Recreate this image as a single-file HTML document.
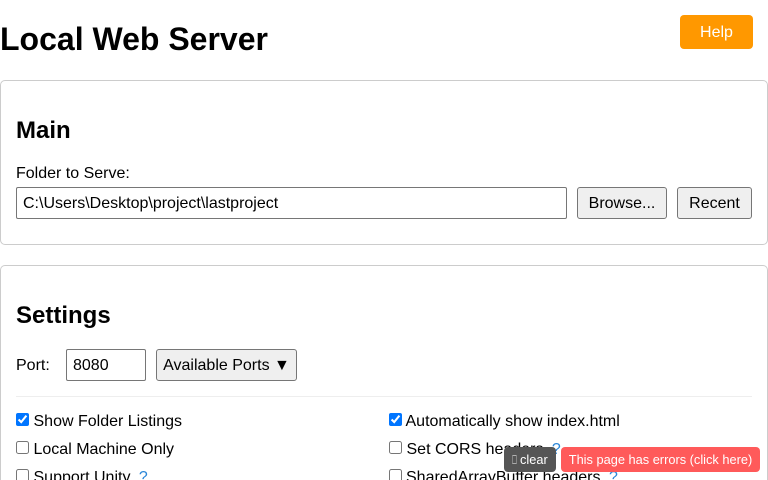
<!DOCTYPE html>
<html>
<head>
<meta charset="utf-8">
<style>
html,body{margin:0;padding:0;width:768px;height:480px;overflow:hidden;background:#fff;font-family:"Liberation Sans",Arial,sans-serif;font-size:16px;color:#000}
#w{position:relative;width:768px;height:480px;overflow:hidden}
.a{position:absolute;white-space:nowrap}
h1,h2{margin:0;font-weight:bold;position:absolute;white-space:nowrap}
h1{font-size:32px;left:0;top:21px;line-height:37px}
h2{font-size:24px;left:16px;line-height:28px}
.panel{position:absolute;left:0;width:766px;border:1px solid #ccc;border-radius:5px}
.box{position:absolute;box-sizing:border-box;border:1px solid #767676;border-radius:2px;background:#fff;line-height:32px;padding-left:6px;white-space:nowrap;color:#000}
.btn{position:absolute;box-sizing:border-box;border:1px solid #767676;border-radius:3px;background:#efefef;line-height:32px;text-align:center;white-space:nowrap;color:#000}
input[type=checkbox]{position:absolute;margin:0;width:13px;height:13px}
.q{color:#2a86d8}
.l{position:absolute;white-space:nowrap;line-height:18px}
.clip{position:absolute;left:0;top:469px;width:768px;height:11px;overflow:hidden}
.clip input{top:0}
.clip .l{top:0}
</style>
</head>
<body>
<div id="w">
<h1>Local Web Server</h1>
<div class="a" style="left:680px;top:15px;width:73px;height:34px;background:#ff9800;border-radius:4px;color:#fff;text-align:center;line-height:35px">Help</div>

<div class="panel" style="top:80px;height:163px"></div>
<h2 style="top:117px">Main</h2>
<div class="l" style="left:16px;top:165px">Folder to Serve:</div>
<div class="box" style="left:16px;top:187px;width:551px;height:32px">C:\Users\Desktop\project\lastproject</div>
<div class="btn" style="left:577px;top:187px;width:90px;height:32px">Browse...</div>
<div class="btn" style="left:677px;top:187px;width:75px;height:32px">Recent</div>

<div class="panel" style="top:265px;height:214px;border-bottom:0;border-radius:5px 5px 0 0"></div>
<h2 style="top:302px">Settings</h2>
<div class="l" style="left:16px;top:357px">Port:</div>
<div class="box" style="left:66px;top:349px;width:80px;height:32px">8080</div>
<div class="btn" style="left:156px;top:349px;width:141px;height:32px">Available Ports ▼</div>
<div class="a" style="left:16px;top:396px;width:736px;height:1px;background:#eee"></div>

<input type="checkbox" checked style="left:16px;top:413px">
<div class="l" style="left:33.5px;top:413px">Show Folder Listings</div>
<input type="checkbox" style="left:16px;top:441px">
<div class="l" style="left:33.5px;top:441px">Local Machine Only</div>

<input type="checkbox" checked style="left:389px;top:413px">
<div class="l" style="left:405.5px;top:413px">Automatically show index.html</div>
<input type="checkbox" style="left:389px;top:441px">
<div class="l" style="left:406.5px;top:441px">Set CORS headers <span class="q" style="margin-left:4px">?</span></div>

<div class="clip">
<input type="checkbox" style="left:16px">
<div class="l" style="left:33.5px">Support Unity <span class="q" style="margin-left:4px">?</span></div>
<input type="checkbox" style="left:389px">
<div class="l" style="left:406px">SharedArrayBuffer headers <span class="q" style="margin-left:4px">?</span></div>
</div>

<div class="a" style="left:504px;top:447px;width:52px;height:25px;background:#555;border-radius:4px;color:#fff;font-size:12.8px;line-height:25px"><span class="a" style="left:6px;top:0;width:8px;text-align:center;transform:scaleX(.55);transform-origin:50% 50%">&#xE000;</span><span class="a" style="left:16px;top:0">clear</span></div>
<div class="a" style="left:561px;top:447px;width:199px;height:25px;background:#f55;border-radius:4px;color:#fff;font-size:12.8px;line-height:25px;text-align:center;opacity:.97">This page has errors (click here)</div>
</div>
</body>
</html>
